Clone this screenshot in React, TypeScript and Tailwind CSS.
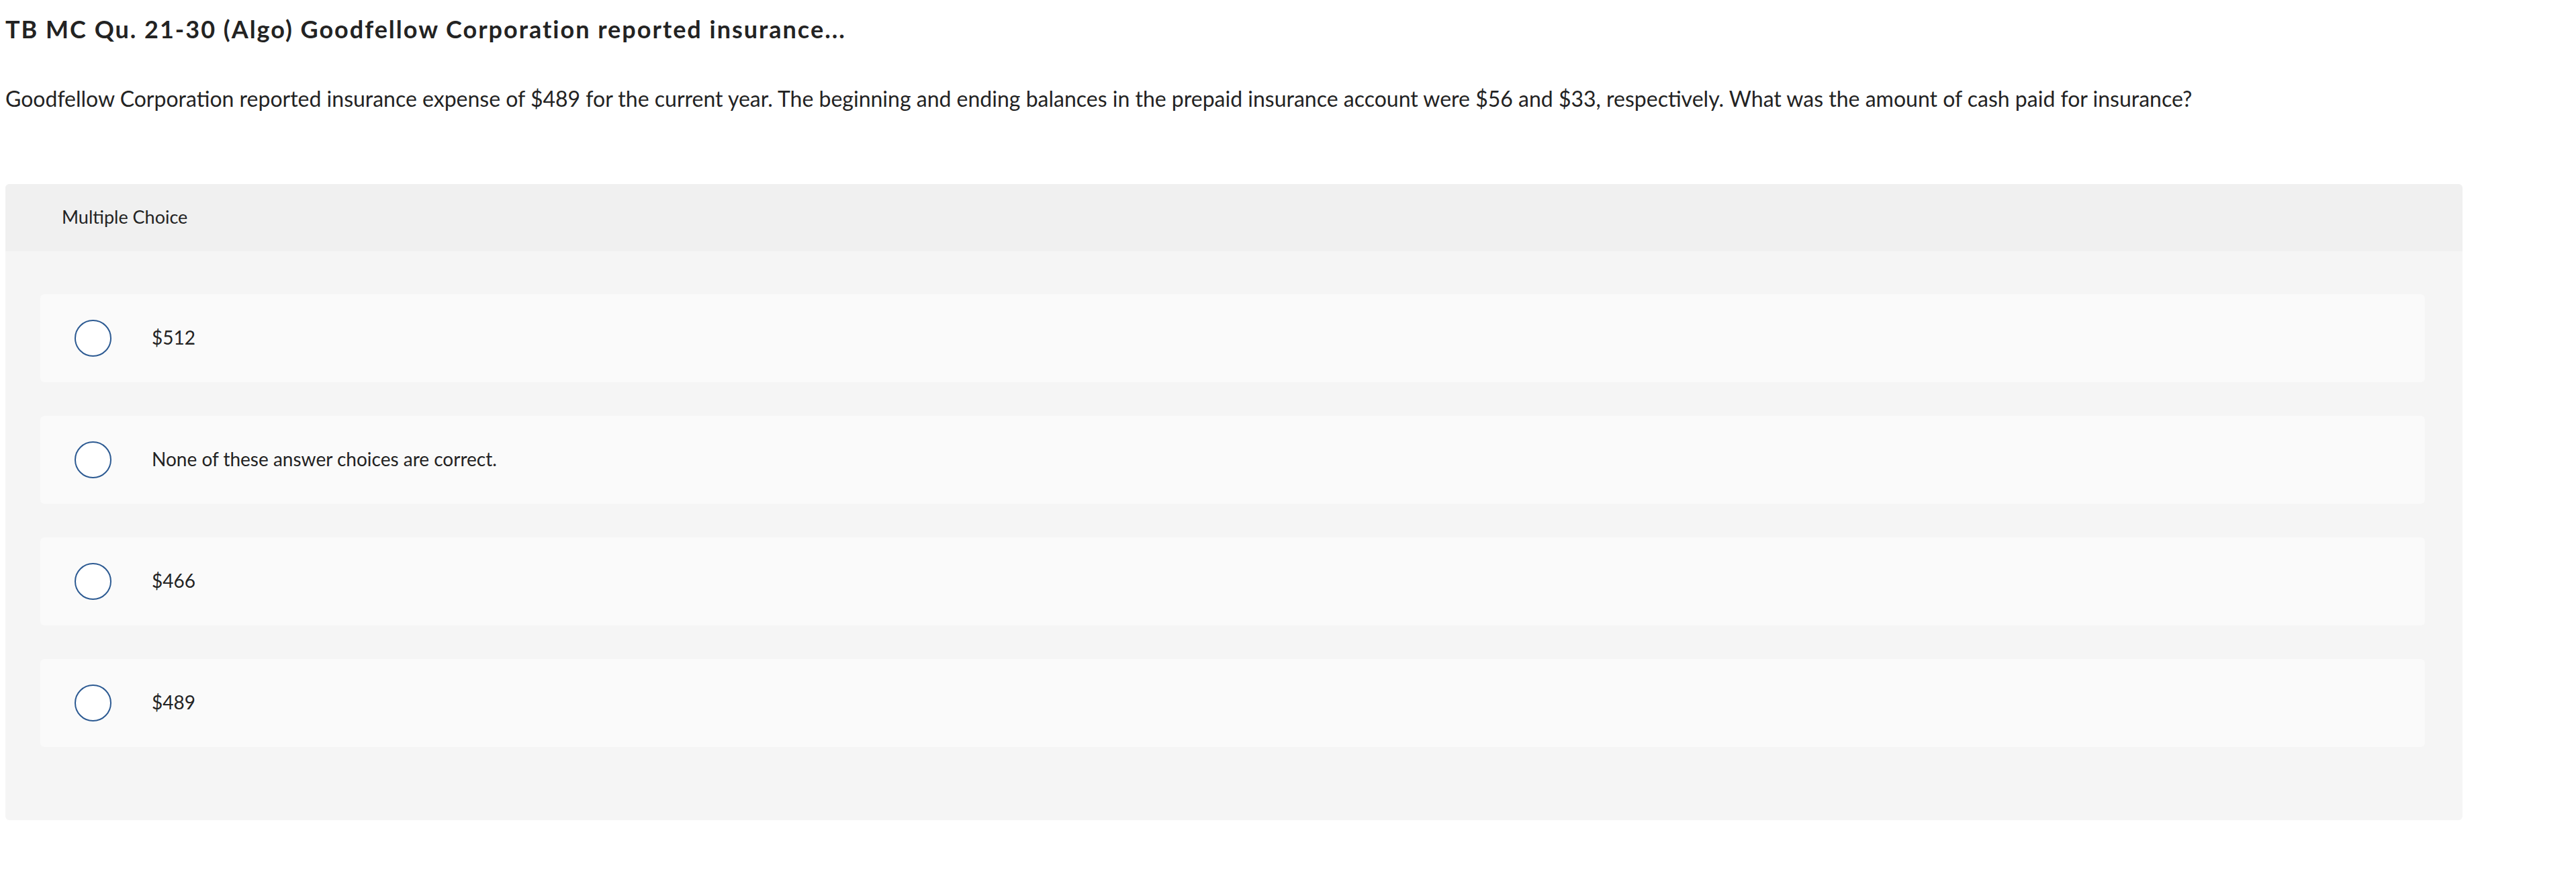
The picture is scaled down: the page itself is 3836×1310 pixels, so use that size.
import React from "react";

const options = ["$512", "None of these answer choices are correct.", "$466", "$489"];

export default function App() {
  return (
    <div className="min-h-[1310px] w-full bg-white pl-[8px] text-[#232323]" style={{ fontFamily: "Lato, 'Open Sans', sans-serif" }}>
      <h1 className="pt-[22px] text-[36px] font-bold leading-[1.2] tracking-[2px] text-[#232323]">
        TB MC Qu. 21-30 (Algo) Goodfellow Corporation reported insurance...
      </h1>
      <p className="mt-[63px] text-[32px] leading-[1.2]">
        Goodfellow Corporation reported insurance expense of $489 for the current year. The beginning and ending balances in the prepaid insurance account were $56 and $33, respectively. What was the amount of cash paid for insurance?
      </p>
      <div className="mt-[107px] w-[3659px] rounded-[6px] bg-[#f5f5f5]">
        <div className="flex h-[100px] items-center rounded-t-[6px] bg-[#f0f0f0] pl-[84px] text-[27px] leading-[1.2]">
          Multiple Choice
        </div>
        <div className="flex flex-col gap-[50px] pb-[109px] pl-[52px] pr-[56px] pt-[64px]">
          {options.map((o) => (
            <div key={o} className="flex h-[131px] items-center rounded-[6px] bg-[#fafafa] pl-[51px]">
              <span className="box-border h-[55px] w-[55px] shrink-0 rounded-full border-[2.5px] border-[#2c5a92] bg-white" />
              <span className="ml-[60px] text-[28px] leading-[1.2]">{o}</span>
            </div>
          ))}
        </div>
      </div>
    </div>
  );
}
